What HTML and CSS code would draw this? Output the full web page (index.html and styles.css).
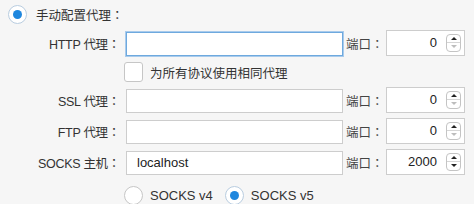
FILE: index.html
```html
<!DOCTYPE html>
<html>
	<head>
		<meta charset="utf-8">
		<title>代理设置</title>
		<link rel="stylesheet" href="styles.css">
	</head>
	<body>
		<div class="proxy">
			<label class="mode">
				<span class="radio checked"></span>
				<span>手动配置代理：</span>
			</label>

			<div class="grid">
				<span class="label">HTTP 代理：</span>
				<span class="field focus"></span>
				<span class="port-label">端口：</span>
				<span class="port"><span class="num">0</span><span class="stepper off"><i class="up"></i><i class="down"></i></span></span>

				<label class="same">
					<span class="check"></span>
					<span>为所有协议使用相同代理</span>
				</label>

				<span class="label">SSL 代理：</span>
				<span class="field"></span>
				<span class="port-label">端口：</span>
				<span class="port"><span class="num">0</span><span class="stepper off"><i class="up"></i><i class="down"></i></span></span>

				<span class="label">FTP 代理：</span>
				<span class="field"></span>
				<span class="port-label">端口：</span>
				<span class="port"><span class="num">0</span><span class="stepper off"><i class="up"></i><i class="down"></i></span></span>

				<span class="label">SOCKS 主机：</span>
				<span class="field">localhost</span>
				<span class="port-label">端口：</span>
				<span class="port"><span class="num">2000</span><span class="stepper"><i class="up"></i><i class="down"></i></span></span>

				<div class="versions">
					<label class="opt"><span class="radio"></span><span>SOCKS v4</span></label>
					<label class="opt"><span class="radio checked"></span><span>SOCKS v5</span></label>
				</div>
			</div>
		</div>
	</body>
</html>
```

FILE: styles.css
```css
* {
	margin: 0;
	padding: 0;
	box-sizing: border-box;
}

body {
	background: #f6f6f6;
	font-family: "Liberation Sans", "Noto Sans CJK TC", sans-serif;
	font-size: 13px;
	color: #333333;
}

.proxy {
	width: 474px;
	height: 204px;
}

.mode {
	height: 28px;
	display: flex;
	align-items: center;
	padding-left: 8px;
	gap: 9px;
	font-size: 12.5px;
}

.radio {
	width: 19px;
	height: 19px;
	border: 1px solid #c6c6c6;
	border-radius: 50%;
	background: #ffffff;
	display: flex;
	align-items: center;
	justify-content: center;
}

.radio.checked {
	border-color: #b9cde0;
}

.radio.checked::after {
	content: "";
	width: 9px;
	height: 9px;
	border-radius: 50%;
	background: #1f87de;
}

.grid {
	display: grid;
	grid-template-columns: 126px 220px 40px 79px;
	grid-template-rows: 31px 26px 31px 31px 31px 29px;
	align-items: center;
}

.label {
	text-align: right;
	padding-right: 6px;
	white-space: nowrap;
	font-size: 12.5px;
	letter-spacing: -0.3px;
}

.field {
	width: 217px;
	height: 24px;
	background: #ffffff;
	border: 1px solid #cdcdcd;
	padding-left: 10px;
	line-height: 22px;
	color: #222222;
}

.field.focus {
	border-color: #6ea9de;
	box-shadow: 0 0 0 1px #a9cbec;
}

.port-label {
	white-space: nowrap;
	color: #444444;
	font-size: 12.5px;
}

.port {
	width: 79px;
	height: 26px;
	margin-top: -2px;
	background: #ffffff;
	border: 1px solid #cdcdcd;
	display: flex;
	align-items: center;
	justify-content: flex-end;
	padding-right: 3px;
}

.num {
	margin-right: 9px;
	color: #222222;
}

.stepper {
	width: 15px;
	height: 18px;
	border: 1px solid #c4c4c4;
	border-radius: 4px;
	display: flex;
	flex-direction: column;
	overflow: hidden;
}

.stepper i {
	flex: 1;
	display: flex;
	align-items: center;
	justify-content: center;
}

.stepper .up {
	border-bottom: 1px solid #d6d6d6;
}

.stepper i::after {
	content: "";
	border-left: 3px solid transparent;
	border-right: 3px solid transparent;
}

.stepper .up::after {
	border-bottom: 3px solid #222222;
}

.stepper .down::after {
	border-top: 3px solid #222222;
}

.stepper.off .down::after {
	border-top-color: #bdbdbd;
}

.same {
	grid-column: 2 / 5;
	display: flex;
	align-items: center;
	gap: 7px;
	margin-left: -2px;
	font-size: 12.5px;
}

.check {
	width: 19px;
	height: 20px;
	background: #ffffff;
	border: 1px solid #c6c6c6;
	border-radius: 3px;
}

.versions {
	grid-column: 2 / 5;
	display: flex;
	align-items: center;
	gap: 12px;
	margin-left: -2px;
	margin-top: 6px;
}

.opt {
	display: flex;
	align-items: center;
	gap: 7px;
}
```
